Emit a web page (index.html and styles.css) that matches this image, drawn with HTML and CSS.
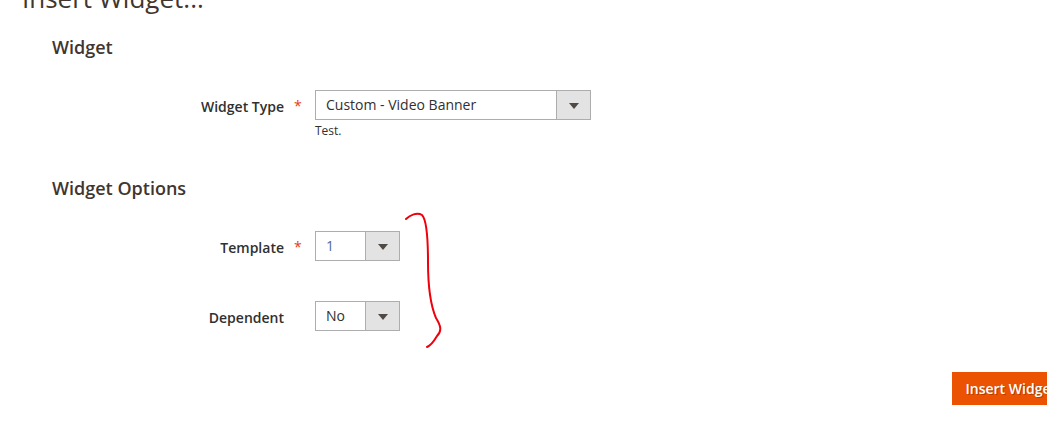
FILE: index.html
```html
<!DOCTYPE html>
<html lang="en">
<head>
    <meta charset="UTF-8">
    <title>Insert Widget</title>
    <link rel="stylesheet" href="styles.css">
</head>
<body>
    <div class="modal">
        <h1 class="modal-title">Insert Widget...</h1>

        <h2 class="section-title">Widget</h2>
        <div class="field">
            <div class="label">Widget Type</div>
            <div class="req">*</div>
            <div class="control">
                <div class="select wide">
                    <span class="value">Custom - Video Banner</span>
                    <span class="arrow"></span>
                </div>
                <div class="note">Test.</div>
            </div>
        </div>

        <h2 class="section-title options">Widget Options</h2>
        <div class="field">
            <div class="label">Template</div>
            <div class="req">*</div>
            <div class="control">
                <div class="select small">
                    <span class="value blue">1</span>
                    <span class="arrow"></span>
                </div>
            </div>
        </div>
        <div class="field next">
            <div class="label">Dependent</div>
            <div class="req"></div>
            <div class="control">
                <div class="select small">
                    <span class="value">No</span>
                    <span class="arrow"></span>
                </div>
            </div>
        </div>

        <div class="footer">
            <button class="primary">Insert Widget</button>
        </div>
    </div>

    <!-- hand drawn annotation over the form -->
    <svg class="scribble" width="1047" height="423" viewBox="0 0 1047 423">
        <path d="M406,219 C410,215 417,212 422,215 C427,220 428,240 428,262 C428,288 430,304 436,318 C441,326 442,331 437,336 C434,341 432,345 427,347" fill="none" stroke="#f0000a" stroke-width="2" stroke-linecap="round"/>
    </svg>
</body>
</html>
```

FILE: styles.css
```css
body { margin: 0; font-family: "Open Sans", "Liberation Sans", sans-serif; background: #fff; color: #303030; overflow: hidden; position: relative; }
.modal { width: 1070px; }
.modal-title { margin: -17px 0 0 22px; font-size: 26px; font-weight: 400; line-height: 1.2; color: #41362f; }
.section-title { margin: 21px 0 0 52px; font-size: 18px; font-weight: 600; line-height: 24px; color: #41362f; }
.section-title.options { margin-top: 36px; }

.field { display: flex; align-items: flex-start; margin-top: 31px; }
.field.next { margin-top: 40px; }
.label { width: 284px; padding-top: 2px; margin-bottom: -2px; text-align: right; font-size: 14px; font-weight: 600; line-height: 30px; color: #303030; }
.req { width: 21px; padding: 2px 0 0 10px; margin-bottom: -2px; color: #eb3a0f; font-size: 14px; line-height: 28px; }

.select { display: flex; height: 30px; box-sizing: border-box; border: 1px solid #adadad; background: #fff; }
.select.wide { width: 276px; }
.select.small { width: 85px; }
.value { flex: 1; padding-left: 10px; font-size: 14px; line-height: 28px; color: #303030; }
.value.blue { color: #4a6c9e; }
.arrow { width: 33px; border-left: 1px solid #adadad; background: #e3e3e3; position: relative; }
.arrow::after { content: ""; position: absolute; left: 12px; top: 12px; border-left: 5px solid transparent; border-right: 5px solid transparent; border-top: 6px solid #514943; }
.note { padding-top: 2px; font-size: 12px; line-height: 18px; color: #303030; }

.footer { display: flex; justify-content: flex-end; margin-top: 41px; }
.primary { background: #eb5202; border: 0; color: #fff; font-family: inherit; font-size: 14px; font-weight: 600; height: 33px; padding: 0 14px; text-shadow: 1px 1px 0 rgba(0,0,0,0.25); }

.scribble { position: absolute; left: 0; top: 0; pointer-events: none; }
```
